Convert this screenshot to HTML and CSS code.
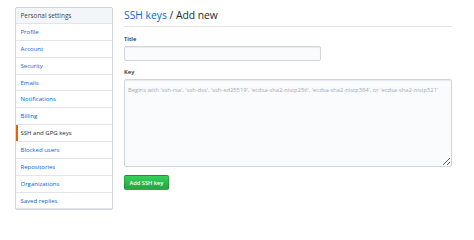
FILE: index.html
```html
<!DOCTYPE html>
<html lang="en">
<head>
<meta charset="utf-8">
<title>SSH keys / Add new</title>
<link rel="stylesheet" href="styles.css">
</head>
<body>
<div class="layout">
  <nav class="menu">
    <div class="menu-heading">Personal settings</div>
    <a class="menu-item" href="#">Profile</a>
    <a class="menu-item" href="#">Account</a>
    <a class="menu-item" href="#">Security</a>
    <a class="menu-item" href="#">Emails</a>
    <a class="menu-item" href="#">Notifications</a>
    <a class="menu-item" href="#">Billing</a>
    <a class="menu-item selected" href="#">SSH and GPG keys</a>
    <a class="menu-item" href="#">Blocked users</a>
    <a class="menu-item" href="#">Repositories</a>
    <a class="menu-item" href="#">Organizations</a>
    <a class="menu-item" href="#">Saved replies</a>
  </nav>
  <main class="main">
    <h2 class="subhead"><a class="subhead-link" href="#">SSH keys</a> / Add new</h2>
    <form class="form">
      <div class="form-group">
        <label class="label" for="title">Title</label>
        <input class="input input-title" id="title" type="text">
      </div>
      <div class="form-group">
        <label class="label" for="key">Key</label>
        <textarea class="input input-key" id="key" placeholder="Begins with 'ssh-rsa', 'ssh-dss', 'ssh-ed25519', 'ecdsa-sha2-nistp256', 'ecdsa-sha2-nistp384', or 'ecdsa-sha2-nistp521'"></textarea>
      </div>
      <button class="btn-primary" type="button">Add SSH key</button>
    </form>
  </main>
</div>
</body>
</html>
```

FILE: styles.css
```css
html, body {
  margin: 0;
  padding: 0;
  background: #ffffff;
}

body {
  font-family: "Open Sans", "Noto Sans", "Liberation Sans", sans-serif;
  color: #24292e;
}

.layout {
  display: flex;
  align-items: flex-start;
  gap: 11px;
  padding: 7px 0 0 15px;
}

.menu {
  width: 98px;
  flex: none;
  box-sizing: border-box;
  border: 1px solid #d1d5da;
  border-radius: 2px;
  display: flex;
  flex-direction: column;
  background: #fff;
}

.menu-heading {
  height: 15px;
  display: flex;
  align-items: center;
  padding-left: 4.5px;
  font-size: 6.4px;
  color: #3f4650;
  background: #f3f5f8;
  border-bottom: 1px solid #e1e4e8;
}

.menu-item {
  height: 15.87px;
  display: flex;
  align-items: center;
  padding-left: 4.5px;
  font-size: 6px;
  color: #0366d6;
  text-decoration: none;
  border-bottom: 1px solid #e1e4e8;
}

.menu-item.selected {
  color: #24292e;
  box-shadow: inset 2px 0 0 #e36209;
}

.main {
  width: 328px;
  flex: none;
}

.subhead {
  margin: 0;
  font-size: 10.3px;
  font-weight: 400;
  line-height: 16px;
  padding-bottom: 3px;
  border-bottom: 1px solid #e1e4e8;
  color: #24292e;
}

.subhead-link {
  color: #0366d6;
  text-decoration: none;
}

.form {
  display: flex;
  flex-direction: column;
  align-items: flex-start;
  padding-top: 8px;
  gap: 7px;
}

.form-group {
  display: flex;
  flex-direction: column;
  gap: 3px;
}

.label {
  font-size: 5.9px;
  font-weight: 600;
  line-height: 8px;
  color: #24292e;
}

.input {
  box-sizing: border-box;
  margin: 0;
  background: #fafbfc;
  border: 1px solid #d1d5da;
  border-radius: 2px;
  box-shadow: inset 0 1px 1px rgba(27, 31, 35, 0.075);
  font-family: inherit;
  outline: none;
}

.input-title {
  width: 197px;
  height: 15px;
}

.input-key {
  width: 328px;
  height: 88px;
  padding: 6px 3px;
  font-size: 5.8px;
  line-height: 8px;
  resize: vertical;
}

.input-key::placeholder {
  color: #a3aab1;
}

.btn-primary {
  margin-top: 1px;
  height: 15px;
  padding: 0 4.5px;
  font-family: inherit;
  font-size: 5.7px;
  font-weight: 600;
  color: #ffffff;
  background: linear-gradient(-180deg, #34d058 0%, #28a745 90%);
  border: 1px solid rgba(27, 31, 35, 0.2);
  border-radius: 2px;
}
```
